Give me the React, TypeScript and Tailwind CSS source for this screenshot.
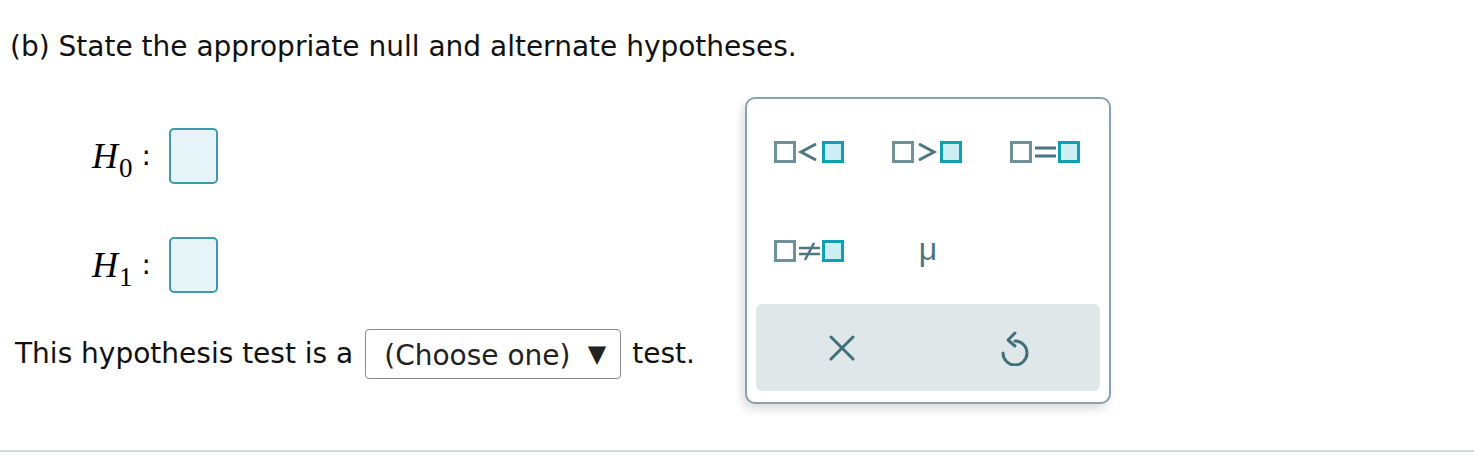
import React from "react";

const SANS = { fontFamily: '"DejaVu Sans", Verdana, sans-serif' };

function Slots({ op }: { op: "lt" | "gt" | "eq" | "ne" }) {
  return (
    <svg width="72" height="22" viewBox="0 0 72 22" fill="none">
      <rect x="1.5" y="1.5" width="19" height="19" fill="#fff" stroke="#6f9199" strokeWidth="3" />
      {op === "lt" && <polyline points="42,3 27,11 42,19" stroke="#4b7682" strokeWidth="3" />}
      {op === "gt" && <polyline points="27,3 42,11 27,19" stroke="#4b7682" strokeWidth="3" />}
      {op === "eq" && (
        <g stroke="#4b7682" strokeWidth="3">
          <line x1="25" y1="7" x2="46" y2="7" />
          <line x1="25" y1="15" x2="46" y2="15" />
        </g>
      )}
      {op === "ne" && (
        <g stroke="#4b7682" strokeWidth="2.5">
          <line x1="25" y1="8" x2="46" y2="8" />
          <line x1="25" y1="14" x2="46" y2="14" />
          <line x1="40" y1="3" x2="31" y2="20" />
        </g>
      )}
      <rect x="49.5" y="1.5" width="19" height="19" fill="#cdeef3" stroke="#0fa0b4" strokeWidth="3" />
    </svg>
  );
}

function AnswerBox() {
  return <div className="h-[56px] w-[49px] rounded-[5px] border-2 border-[#3d9aab] bg-[#e6f4f8]" />;
}

function Hyp({ sub }: { sub: string }) {
  return (
    <div className="flex items-center">
      <div
        className="flex w-[78px] items-end justify-end pr-[18px] leading-none text-black"
        style={{ fontFamily: '"Liberation Serif", "Times New Roman", serif' }}
      >
        <span className="text-[36px] italic">H</span>
        <span className="ml-[1px] translate-y-[8px] text-[27px]">{sub}</span>
        <span className="ml-[9px] mb-[4px] text-[28px]" style={SANS}>:</span>
      </div>
      <AnswerBox />
    </div>
  );
}

export default function App() {
  return (
    <div className="h-[475px] w-full bg-white text-[#111]" style={SANS}>
      <div className="pl-[10px] pt-[30px] text-[28px] leading-[34px]">
        (b) State the appropriate null and alternate hypotheses.
      </div>

      <div className="mt-[33px] flex">
        <div className="w-[745px] shrink-0">
          <div className="ml-[91px] pt-[31px]">
            <Hyp sub="0" />
            <div className="h-[53px]" />
            <Hyp sub="1" />
          </div>
          <div className="mt-[36px] flex items-center pl-[15px] text-[28px]">
            <span>This hypothesis test is a</span>
            <div className="ml-[12px] flex h-[50px] w-[256px] items-center rounded-[4px] border-[1.5px] border-[#8a8a8a] pl-[18px] pr-[14px] text-[#222]">
              <span className="mt-[4px]">(Choose one)</span>
              <span className="ml-auto text-[24px]">▼</span>
            </div>
            <span className="ml-[11px]">test.</span>
          </div>
        </div>

        <div className="flex h-[307px] w-[366px] shrink-0 flex-col rounded-[10px] border-2 border-[#8aa3aa] bg-white px-[4px] shadow-[-3px_5px_10px_rgba(0,0,0,0.14)]">
          <div className="grid w-[354px] grid-cols-3 pt-[42px]">
            <div className="flex justify-center"><Slots op="lt" /></div>
            <div className="flex justify-center"><Slots op="gt" /></div>
            <div className="flex justify-center"><Slots op="eq" /></div>
          </div>
          <div className="mt-[70px] grid h-[26px] w-[354px] grid-cols-3 items-center">
            <div className="flex justify-center"><Slots op="ne" /></div>
            <div
              className="flex justify-center pb-[4px] text-[32px] leading-none text-[#4b7682]"
              style={{ fontFamily: '"Liberation Sans", Arial, sans-serif' }}
            >
              μ
            </div>
            <div />
          </div>
          <div className="ml-[5px] mt-[45px] grid h-[87px] w-[344px] grid-cols-2 rounded-[6px] bg-[#e0e7e9]">
            <div className="flex items-center justify-center">
              <svg width="26" height="26" viewBox="0 0 26 26" fill="none" stroke="#3f6f7b" strokeWidth="3" strokeLinecap="round">
                <line x1="2" y1="2" x2="24" y2="24" />
                <line x1="24" y1="2" x2="2" y2="24" />
              </svg>
            </div>
            <div className="flex items-center justify-center">
              <svg width="30" height="36" viewBox="0 0 30 36" fill="none" stroke="#3f6f7b" strokeWidth="3" strokeLinecap="round" strokeLinejoin="round">
                <path d="M16 11 A12 12 0 1 1 4 23" />
                <polyline points="16,3 9,10 16,16" />
              </svg>
            </div>
          </div>
        </div>
      </div>

      <div className="mt-[46px] h-[2px] w-full bg-[#d0dcdc]" />
    </div>
  );
}
